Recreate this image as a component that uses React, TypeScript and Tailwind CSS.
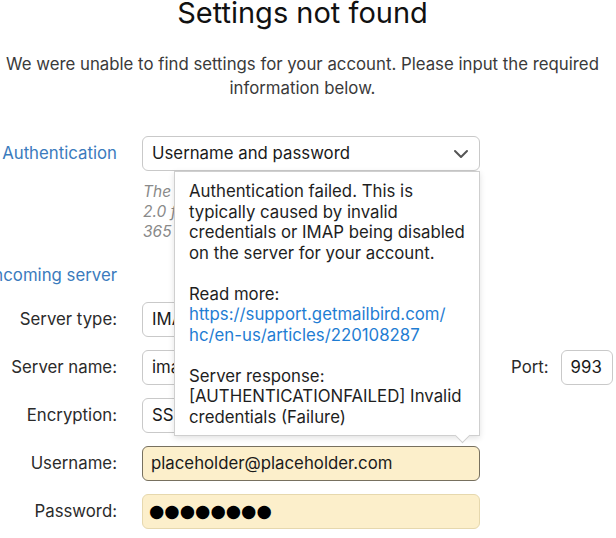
import React from "react";

const labelCls = "w-[117px] shrink-0 flex justify-end whitespace-nowrap text-[16.8px] text-[#2b2b2b]";
const inputCls = "h-[35px] rounded-[6px] border border-[#c9c9c9] bg-white flex items-center pl-[9px] text-[16.8px] text-[#1a1a1a] overflow-hidden whitespace-nowrap";

export default function App() {
  return (
    <div className="relative w-[616px] h-[538px] overflow-hidden bg-white font-['Inter',sans-serif]">
      <div className="w-[605px] text-center">
        <h1 className="text-[29px] leading-[26px] text-[#111]">Settings not found</h1>
        <p className="mt-[26px] text-[16.8px] leading-[24px] text-[#3a3a3a]">
          We were unable to find settings for your account. Please input the required information below.
        </p>
      </div>

      <div className="mt-[36px] flex flex-col">
        {/* Authentication */}
        <div className="flex items-center gap-[25px]">
          <div className={labelCls + " !text-[#3b7bbd]"}>Authentication</div>
          <div className={inputCls + " w-[338px] justify-between pr-[10px]"}>
            <span>Username and password</span>
            <svg width="16" height="10" viewBox="0 0 16 10" fill="none">
              <path d="M2 2 L8 8 L14 2" stroke="#555" strokeWidth="2" strokeLinecap="round" strokeLinejoin="round" />
            </svg>
          </div>
        </div>
        <div className="ml-[143px] mt-[11px] w-[320px] whitespace-nowrap text-[15.5px] leading-[20px] italic text-[#8a8a8a]">
          The recommended method is OAuth<br />
          2.0 for Gmail, Outlook and Office<br />
          365 accounts.
        </div>

        {/* Incoming server */}
        <div className="mt-[21px] flex items-center gap-[25px]">
          <div className={labelCls + " !text-[#3b7bbd] leading-[24px]"}>Incoming server</div>
        </div>

        <div className="mt-[15px] flex flex-col gap-[13px]">
          <div className="flex items-center gap-[25px]">
            <div className={labelCls}>Server type:</div>
            <div className={inputCls + " w-[200px]"}>IMAP</div>
          </div>
          <div className="flex items-center gap-[25px]">
            <div className={labelCls}>Server name:</div>
            <div className={inputCls + " w-[338px]"}>imap.placeholder.com</div>
            <div className="ml-[6px] flex items-center gap-[12px]">
              <span className="text-[16.8px] text-[#2b2b2b]">Port:</span>
              <div className={inputCls + " w-[52px] pl-[6px]"}>993</div>
            </div>
          </div>
          <div className="flex items-center gap-[25px]">
            <div className={labelCls}>Encryption:</div>
            <div className={inputCls + " w-[200px]"}>SSL</div>
          </div>
          <div className="flex items-center gap-[25px]">
            <div className={labelCls}>Username:</div>
            <div className="h-[35px] w-[338px] rounded-[6px] border border-[#77705f] bg-[#fcefcb] flex items-center pl-[8px] text-[16.8px] text-[#1a1a1a]">
              placeholder@placeholder.com
            </div>
          </div>
          <div className="flex items-center gap-[25px]">
            <div className={labelCls}>Password:</div>
            <div className="h-[35px] w-[338px] rounded-[6px] border border-[#e6d8ae] bg-[#fcefcb] flex items-center pl-[6px] text-[17.6px] text-black font-['DejaVu_Sans',sans-serif]">
              ●●●●●●●●
            </div>
          </div>
        </div>
      </div>

      {/* Tooltip */}
      <div className="absolute left-[174px] top-[171px] w-[306px] h-[265px] border border-[#cfcfcf] bg-white shadow-[0_2px_6px_rgba(0,0,0,0.12)] pl-[14px] pr-[10px] pt-[9px] text-[16.8px] leading-[20.5px] text-[#1e1e1e]">
        <p>Authentication failed. This is typically caused by invalid credentials or IMAP being disabled on the server for your account.</p>
        <p className="mt-[20.5px]">Read more:</p>
        <p className="text-[#1f7dd3]">https://support.getmailbird.com/<br />hc/en-us/articles/220108287</p>
        <p className="mt-[20.5px]">Server response:<br />[AUTHENTICATIONFAILED] Invalid credentials (Failure)</p>
        <div className="absolute right-[11px] bottom-[-6px] w-[11px] h-[11px] rotate-45 bg-white border-r border-b border-[#cfcfcf]" />
      </div>
    </div>
  );
}
